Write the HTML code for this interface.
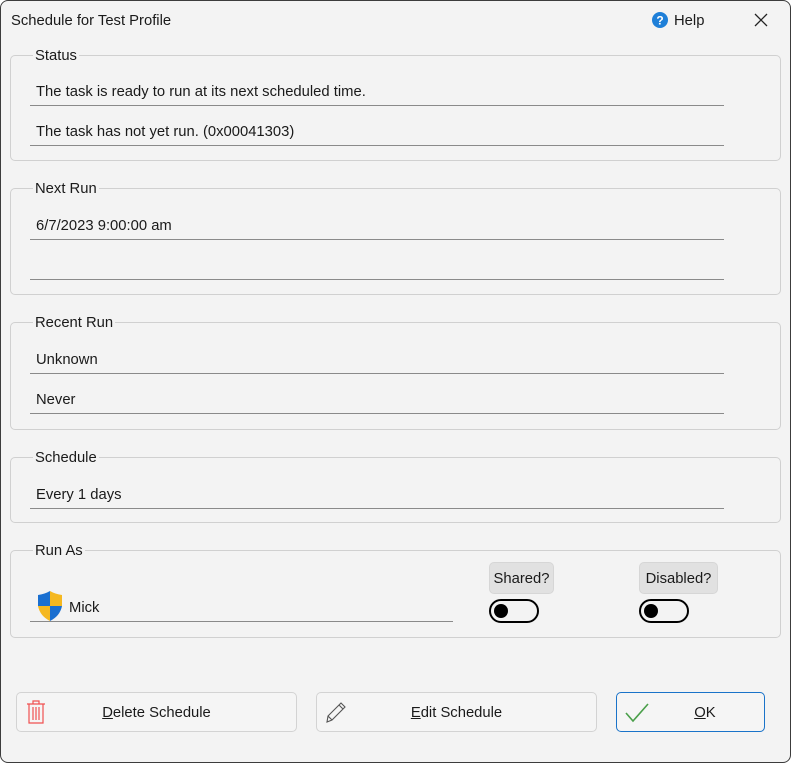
<!DOCTYPE html><html><head><style>
body{margin:0;width:791px;height:763px;background:#fff;font-family:"Liberation Sans",sans-serif;font-size:14.8px;color:#1a1a1a;overflow:hidden}
.win{position:absolute;left:0;top:0;width:789px;height:761px;border:1px solid #3c3c3c;border-radius:8px;background:#f3f3f3}
.a{position:absolute;white-space:nowrap}
.t{margin-top:1px}
.g{position:absolute;left:10px;width:769px;border:1px solid #d0d0d0;border-radius:5px}
.gl{position:absolute;left:33px;background:#f3f3f3;padding:0 2px;line-height:16px;margin-top:1px}
.ln{position:absolute;left:30px;width:694px;height:1px;background:#8a8a8a}
.btn{position:absolute;top:692px;height:38px;border:1px solid #d3d3d3;border-radius:5px;background:#f5f5f5;text-align:center;line-height:41px}
.pill{position:absolute;top:562px;height:30px;background:#e1e1e1;border:1px solid #d6d6d6;border-radius:5px;line-height:32px;text-align:center}
.tg{position:absolute;top:599px;width:46px;height:20px;border:2px solid #000;border-radius:12px}
.tg:after{content:"";position:absolute;left:3px;top:3px;width:14px;height:14px;border-radius:50%;background:#000}
</style></head><body><div class="win"></div>
<div class="a" style="left:11px;top:13px">Schedule for Test Profile</div>
<svg class="a" style="left:652px;top:12px" width="16" height="16"><circle cx="8" cy="8" r="8" fill="#1e7fd8"/><text x="8" y="12.5" fill="#fff" font-size="12" font-weight="bold" text-anchor="middle" font-family="Liberation Sans">?</text></svg>
<div class="a" style="left:674px;top:13px">Help</div>
<svg class="a" style="left:754px;top:13px" width="14" height="14"><path d="M1 1L13 13M13 1L1 13" stroke="#222" stroke-width="1.3"/></svg>

<div class="g" style="top:55px;height:104px"></div><div class="gl a" style="top:47px">Status</div>
<div class="a" style="left:36px;top:84px">The task is ready to run at its next scheduled time.</div><div class="ln" style="top:105px"></div>
<div class="a" style="left:36px;top:124px">The task has not yet run. (0x00041303)</div><div class="ln" style="top:145px"></div>

<div class="g" style="top:188px;height:105px"></div><div class="gl a" style="top:180px">Next Run</div>
<div class="a" style="left:36px;top:218px">6/7/2023 9:00:00 am</div><div class="ln" style="top:239px"></div><div class="ln" style="top:279px"></div>

<div class="g" style="top:322px;height:106px"></div><div class="gl a" style="top:314px">Recent Run</div>
<div class="a" style="left:36px;top:352px">Unknown</div><div class="ln" style="top:373px"></div>
<div class="a" style="left:36px;top:392px">Never</div><div class="ln" style="top:413px"></div>

<div class="g" style="top:457px;height:64px"></div><div class="gl a" style="top:449px">Schedule</div>
<div class="a" style="left:36px;top:487px">Every 1 days</div><div class="ln" style="top:508px"></div>

<div class="g" style="top:550px;height:86px"></div><div class="gl a" style="top:542px">Run As</div>
<svg class="a" style="left:36px;top:591px" width="28" height="30" viewBox="0 0 28 30"><path d="M2 4Q9 3 14 0V15H2Z" fill="#1a6fd0"/><path d="M14 0Q19 3 26 4V15H14Z" fill="#f5b820"/><path d="M2 15H14V30Q4 25 2 15Z" fill="#f5b820"/><path d="M14 15H26Q24 25 14 30Z" fill="#1a6fd0"/></svg>
<div class="a" style="left:69px;top:600px">Mick</div><div class="ln" style="top:621px;width:423px"></div>
<div class="pill" style="left:489px;width:63px">Shared?</div><div class="tg" style="left:489px"></div>
<div class="pill" style="left:639px;width:77px">Disabled?</div><div class="tg" style="left:639px"></div>

<div class="btn" style="left:16px;width:279px"><u>D</u>elete Schedule</div>
<svg class="a" style="left:25px;top:700px" width="22" height="24"><g fill="none" stroke="#f05050" stroke-width="1.2"><path d="M2 4H20M8 4V1H14V4M4 4V23H18V4M8 7V20M11 7V20M14 7V20"/></g></svg>
<div class="btn" style="left:316px;width:279px"><u>E</u>dit Schedule</div>
<svg class="a" style="left:325px;top:701px" width="22" height="22"><path d="M2 21L3 15L16 2L20 6L7 19ZM3 15L7 19M14 4L18 8" fill="none" stroke="#555" stroke-width="1.1"/></svg>
<div class="btn" style="left:616px;width:147px;border-color:#1a73c9;border-radius:5px">&nbsp;&nbsp;&nbsp;&nbsp;&nbsp;&nbsp;&nbsp;<u>O</u>K</div>
<svg class="a" style="left:625px;top:703px" width="24" height="20"><path d="M1 10L8 18L23 1" fill="none" stroke="#4a9f4a" stroke-width="1.6"/></svg>
</body></html>
